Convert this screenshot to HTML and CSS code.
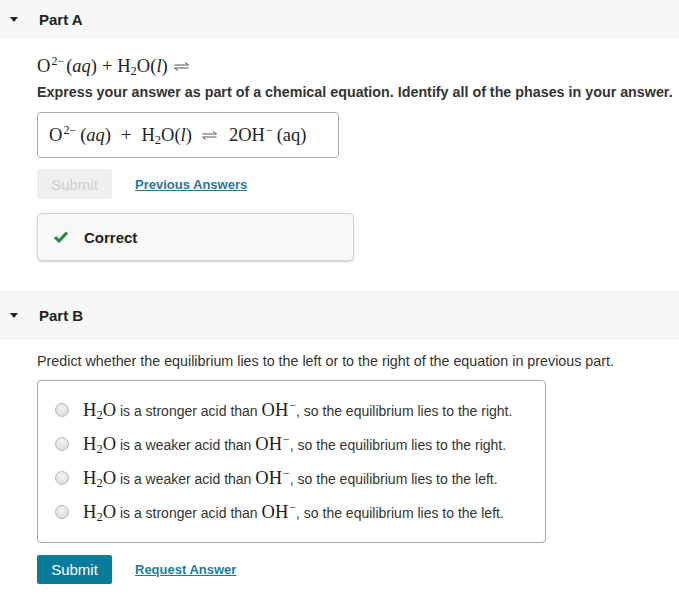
FILE: index.html
```html
<!DOCTYPE html>
<html lang="en">
<head>
  <meta charset="UTF-8">
  <title>Part A / Part B</title>
  <link rel="stylesheet" href="styles.css">
</head>
<body>

  <!-- Part A -->
  <div class="part-head part-a">
    <span class="caret"></span>
    <span class="part-title">Part A</span>
  </div>
  <div class="part-body">
    <p class="equation">
      <span class="m">O<sup>2&minus;</sup><span class="par">(</span><i>aq</i><span class="par">)</span></span>
      <span class="m op">+</span>
      <span class="m">H<sub>2</sub>O<span class="par">(</span><i>l</i><span class="par">)</span></span>
      <svg class="harpoon" width="15" height="9" viewBox="0 0 15 9"><path d="M0.5 3H14.5L11 0.3M14.5 6H0.5L4 8.7" fill="none" stroke="#555" stroke-width="1"/></svg>
    </p>
    <p class="instruction">Express your answer as part of a chemical equation. Identify all of the phases in your answer.</p>

    <div class="answer-box">
      <span class="m">O<sup>2&minus;</sup><span class="par">(</span><i>aq</i><span class="par">)</span></span>
      <span class="m op">+</span>
      <span class="m">H<sub>2</sub>O<span class="par">(</span><i>l</i><span class="par">)</span></span>
      <svg class="harpoon" width="15" height="9" viewBox="0 0 15 9"><path d="M0.5 3H14.5L11 0.3M14.5 6H0.5L4 8.7" fill="none" stroke="#555" stroke-width="1"/></svg>
      <span class="m">2OH<sup>&minus;</sup><span class="par">(</span>aq<span class="par">)</span></span>
    </div>

    <div class="actions">
      <button type="button" class="btn btn-disabled" disabled>Submit</button>
      <a href="#" class="link">Previous Answers</a>
    </div>

    <div class="feedback">
      <svg class="check" width="14" height="12" viewBox="0 0 14 12"><path d="M1 6.2L5 10L13 1.6" fill="none" stroke="#1f8744" stroke-width="3"/></svg>
      <span>Correct</span>
    </div>
  </div>

  <!-- Part B -->
  <div class="part-head part-b">
    <span class="caret"></span>
    <span class="part-title">Part B</span>
  </div>
  <div class="part-body">
    <p class="question">Predict whether the equilibrium lies to the left or to the right of the equation in previous part.</p>

    <div class="choices">
      <label class="choice"><span class="radio"></span><span class="choice-text"><span class="m">H<sub>2</sub>O</span> is a stronger acid than <span class="m">OH<sup>&minus;</sup></span>, so the equilibrium lies to the right.</span></label>
      <label class="choice"><span class="radio"></span><span class="choice-text"><span class="m">H<sub>2</sub>O</span> is a weaker acid than <span class="m">OH<sup>&minus;</sup></span>, so the equilibrium lies to the right.</span></label>
      <label class="choice"><span class="radio"></span><span class="choice-text"><span class="m">H<sub>2</sub>O</span> is a weaker acid than <span class="m">OH<sup>&minus;</sup></span>, so the equilibrium lies to the left.</span></label>
      <label class="choice"><span class="radio"></span><span class="choice-text"><span class="m">H<sub>2</sub>O</span> is a stronger acid than <span class="m">OH<sup>&minus;</sup></span>, so the equilibrium lies to the left.</span></label>
    </div>

    <div class="actions">
      <button type="button" class="btn btn-primary">Submit</button>
      <a href="#" class="link">Request Answer</a>
    </div>
  </div>

</body>
</html>
```

FILE: styles.css
```css
/* Global styling */
body { font-family: "Liberation Sans", Arial, sans-serif; font-size: 14px; color: #333; margin: 0; padding: 0; background-color: #fff; }
p { margin: 0; }

/* Part headers */
.part-head { display: flex; align-items: center; background-color: #f7f7f7; padding-left: 10px; }
.part-a { height: 39px; }
.part-b { height: 49px; margin-top: 30px; }
.caret { width: 0; height: 0; border-left: 4.5px solid transparent; border-right: 4.5px solid transparent; border-top: 5px solid #222; margin-right: 21px; }
.part-title { font-weight: bold; font-size: 15px; color: #222; }

/* Part body */
.part-body { padding-left: 37px; }

/* Math text */
.m { font-family: "Liberation Serif", "Times New Roman", serif; font-size: 18.5px; color: #222; }
.m sup { font-size: 12px; vertical-align: 7px; line-height: 0; margin-left: 1px; margin-right: 2px; }
.m sub { font-size: 12.5px; vertical-align: -3px; line-height: 0; }
.m i { font-style: italic; }
.par { font-style: normal; }
.op { margin: 0 1px; }
.harpoon { vertical-align: 1px; margin-left: 2px; }

.equation { margin-top: 16px; height: 22px; line-height: 22px; }
.instruction { font-weight: bold; font-size: 14.3px; margin-top: 7px; line-height: 16px; }

/* Answer box: flex, so spacing comes from margins only */
.answer-box { box-sizing: border-box; width: 302px; height: 46px; margin-top: 12px; border: 1px solid #a9a9a9; border-radius: 4px; display: flex; align-items: center; padding-left: 11px; white-space: nowrap; }
.answer-box .m sup { margin-right: 4px; }
.answer-box .op { margin: 0 10px; }
.answer-box .harpoon { margin: 0 12px 0 10px; }

/* Actions */
.actions { display: flex; align-items: center; margin-top: 11px; }
.btn { width: 75px; height: 30px; font-family: inherit; font-size: 15px; border: none; border-radius: 2px; padding: 0; }
.btn-disabled { background-color: #efefef; color: #d0d0d0; }
.btn-primary { background-color: #097c9b; color: #fff; cursor: pointer; }
.link { margin-left: 23px; color: #1c7c99; font-weight: bold; font-size: 13px; text-decoration: underline; }

/* Feedback */
.feedback { box-sizing: border-box; width: 317px; height: 48px; margin-top: 14px; background-color: #f8f8f8; border: 1px solid #d4d4d4; border-radius: 5px; box-shadow: 0 1px 2px rgba(0, 0, 0, 0.2); display: flex; align-items: center; padding-left: 16px; font-weight: bold; font-size: 15px; color: #222; }
.check { margin-right: 16px; }

/* Part B */
.question { margin-top: 13px; line-height: 16px; font-size: 14.3px; }
.choices { box-sizing: border-box; width: 509px; height: 163px; margin-top: 11px; border: 1px solid #a9a9a9; border-radius: 4px; padding-top: 12px; }
.choice { display: flex; align-items: center; height: 34px; padding-left: 17px; }
.choice-text { white-space: nowrap; }
.choice .m sup { margin-right: 0; }
.radio { width: 12px; height: 12px; border-radius: 50%; border: 1px solid #b9b9b9; background: radial-gradient(circle at 50% 35%, #f4f4f4, #d6d6d6); margin-right: 14px; flex-shrink: 0; }
.part-b + .part-body .actions { margin-top: 12px; }
.part-b + .part-body .btn { height: 29px; }
```
